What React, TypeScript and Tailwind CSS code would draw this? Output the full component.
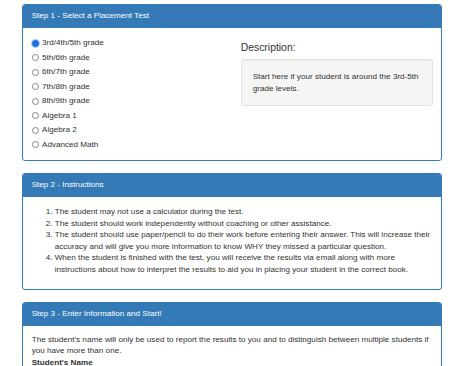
import React from "react";

const font = { fontFamily: '"Liberation Sans", Arial, sans-serif' };

function Radio({ label, checked }: { label: string; checked?: boolean }) {
  return (
    <div className="flex items-center h-[14.5px]">
      {checked ? (
        <span className="w-[7px] h-[7px] rounded-full bg-[#1a73e8] border border-[#1a6fd8] shadow-[0_0_0_1px_#a9c8f2] flex-none" />
      ) : (
        <span className="w-[7px] h-[7px] rounded-full bg-white border border-[#858585] flex-none" />
      )}
      <span className="ml-[3px]">{label}</span>
    </div>
  );
}

function Panel({ title, children }: { title: string; children: React.ReactNode }) {
  return (
    <div className="border border-[#337ab7] rounded-[3px] bg-white overflow-hidden">
      <div className="h-[23px] bg-[#337ab7] text-white flex items-center px-[8.7px] border-b border-[#337ab7] text-[8.1px]">
        {title}
      </div>
      {children}
    </div>
  );
}

export default function App() {
  const radios = [
    "3rd/4th/5th grade",
    "5th/6th grade",
    "6th/7th grade",
    "7th/8th grade",
    "8th/9th grade",
    "Algebra 1",
    "Algebra 2",
    "Advanced Math",
  ];
  return (
    <div className="w-[474px] h-[366px] overflow-hidden bg-white text-[#333] text-[8.12px] leading-[11.6px]" style={font}>
      <div className="ml-[22px] w-[420px] pt-[4px] flex flex-col gap-[12px]">
        <Panel title="Step 1 - Select a Placement Test">
          <div className="flex p-[8px]">
            <div className="w-1/2 pl-[1px]">
              {radios.map((r, i) => (
                <Radio key={r} label={r} checked={i === 0} />
              ))}
            </div>
            <div className="w-1/2 pl-[8.7px]">
              <div className="text-[10.4px] leading-[11.5px] mt-[6px] mb-[5.8px]">Description:</div>
              <div className="bg-[#f5f5f5] border border-[#e3e3e3] rounded-[2px] p-[11px] shadow-[inset_0_1px_1px_rgba(0,0,0,0.05)]">
                Start here if your student is around the 3rd-5th
                <br />
                grade levels.
              </div>
            </div>
          </div>
        </Panel>
        <Panel title="Step 2 - Instructions">
          <div className="px-[8.7px] pt-[9px] pb-[8px]">
            <ol className="list-decimal pl-[23px] mb-[5px]">
              <li>The student may not use a calculator during the test.</li>
              <li>The student should work independently without coaching or other assistance.</li>
              <li>
                The student should use paper/pencil to do their work before entering their answer. This will increase their
                <br />
                accuracy and will give you more information to know WHY they missed a particular question.
              </li>
              <li>
                When the student is finished with the test, you will receive the results via email along with more
                <br />
                instructions about how to interpret the results to aid you in placing your student in the correct book.
              </li>
            </ol>
          </div>
        </Panel>
        <Panel title="Step 3 - Enter Information and Start!">
          <div className="px-[8.7px] pt-[8px] pb-[8px]">
            <p>
              The student's name will only be used to report the results to you and to distinguish between multiple students if
              <br />
              you have more than one.
            </p>
            <div className="font-bold">Student's Name</div>
          </div>
        </Panel>
      </div>
    </div>
  );
}
